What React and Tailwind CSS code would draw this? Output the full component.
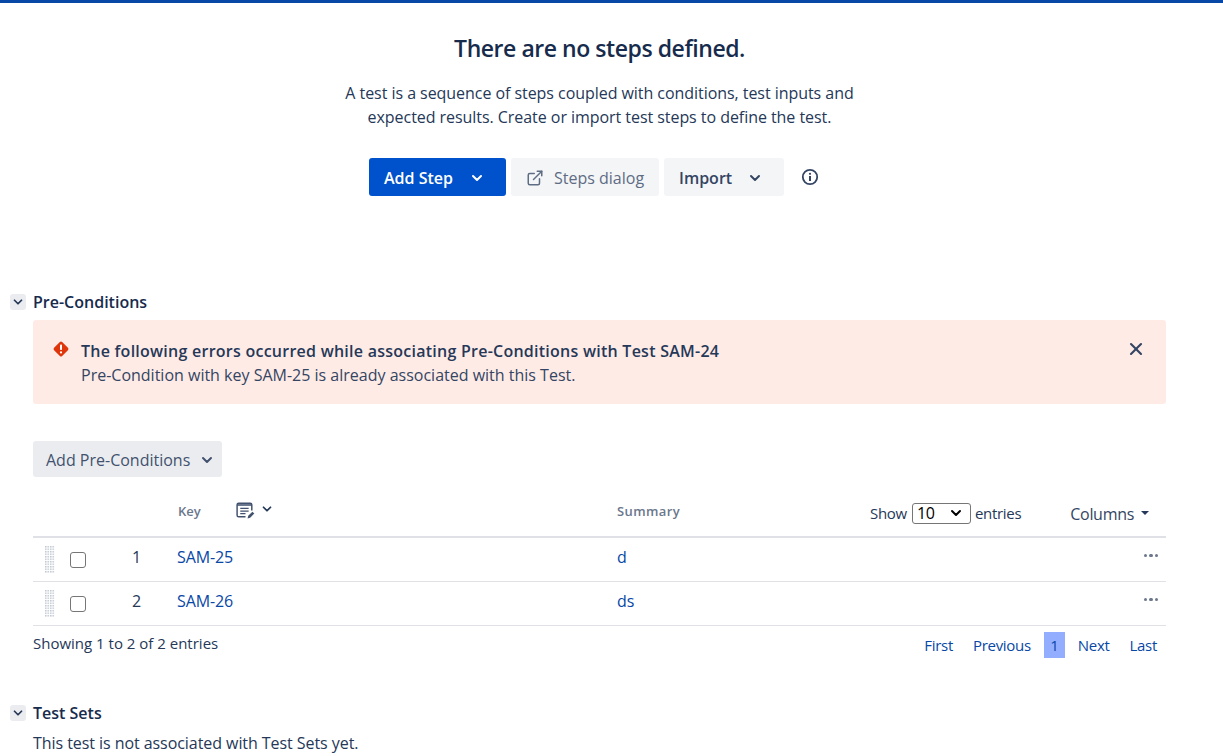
import React from "react";
import { ChevronDown, X, ExternalLink } from "lucide-react";

const font = "font-['Open_Sans','Noto_Sans',sans-serif]";

const SectionTitle = ({ children }) => (
    <div className="flex items-center h-5">
        <span className="w-4 h-4 ml-[10px] mr-[7px] bg-[#ebecf0] rounded-[3px] flex items-center justify-center">
            <ChevronDown className="w-3.5 h-3.5 text-[#253858]" strokeWidth={3} />
        </span>
        <span className="text-[16px] font-semibold text-[#172b4d]">{children}</span>
    </div>
);

const Grip = () => (
    <svg width="10" height="27" viewBox="0 0 10 27" className="text-[#c1c7d0]">
        <defs>
            <pattern id="grip" width="2.5" height="2.5" patternUnits="userSpaceOnUse">
                <rect width="1.5" height="1.5" fill="currentColor" />
            </pattern>
        </defs>
        <rect width="10" height="27" fill="url(#grip)" />
    </svg>
);

const Row = ({ n, issue, summary }) => (
    <div className="flex items-center h-11 border-b border-[#dfe1e6] text-[16px] tracking-[-0.1px]">
        <div className="w-[37px] pl-3 shrink-0"><Grip /></div>
        <div className="w-[47px] shrink-0">
            <span className="block w-4 h-4 border border-[#767676] rounded-[3px] bg-white" />
        </div>
        <div className="w-[60px] shrink-0 text-[#253858] pb-1.5 pl-[15px]">{n}</div>
        <a className="w-[440px] shrink-0 text-[#0747a6] pb-1.5">{issue}</a>
        <a className="flex-1 text-[#0747a6] pb-1.5">{summary}</a>
        <span className="flex gap-[2px] pr-2 pb-2">
            <i className="w-[3.5px] h-[3.5px] rounded-full bg-[#6b778c]" />
            <i className="w-[3.5px] h-[3.5px] rounded-full bg-[#6b778c]" />
            <i className="w-[3.5px] h-[3.5px] rounded-full bg-[#6b778c]" />
        </span>
    </div>
);

const App = () => {
    return (
        <div className={`${font} bg-white h-[756px] overflow-hidden text-[#253858] border-t-[3px] border-[#0747a6]`}>
            {/* Empty state */}
            <div className="pl-[33px] pr-[57px] text-center">
                <h1 className="mt-[29px] text-[23px] leading-8 font-semibold text-[#172b4d] tracking-[-0.45px]">
                    There are no steps defined.
                </h1>
                <p className="mt-[17px] text-[16px] leading-6 text-[#253858] tracking-[-0.05px]">
                    A test is a sequence of steps coupled with conditions, test inputs and
                    <br />
                    expected results. Create or import test steps to define the test.
                </p>
                <div className="mt-[29px] flex justify-center items-center h-[38px] text-[16px]">
                    <button className="h-[38px] w-[137px] pt-[1px] bg-[#0052cc] text-white font-semibold rounded-[3px] flex items-center pl-[15px]">
                        Add Step
                        <ChevronDown className="w-4 h-4 ml-4" strokeWidth={3} />
                    </button>
                    <button className="h-[38px] w-[148px] pt-[1px] ml-[5px] bg-[#f4f5f7] text-[#5e6c84] rounded-[3px] flex items-center pl-[15px]">
                        <ExternalLink className="w-[18px] h-[18px] mr-[10px]" strokeWidth={2} />
                        Steps dialog
                    </button>
                    <button className="h-[38px] w-[120px] pt-[1px] ml-[5px] bg-[#f4f5f7] text-[#344563] font-semibold rounded-[3px] flex items-center pl-[15px]">
                        Import
                        <ChevronDown className="w-4 h-4 ml-[15px]" strokeWidth={3} />
                    </button>
                    <svg width="18" height="18" viewBox="0 0 18 18" className="ml-[17px] mr-[11px] text-[#344563]" fill="none">
                        <circle cx="9" cy="9" r="7.2" stroke="currentColor" strokeWidth="1.8" />
                        <rect x="8" y="8" width="2" height="5" fill="currentColor" />
                        <circle cx="9" cy="5.8" r="1.1" fill="currentColor" />
                    </svg>
                </div>
            </div>

            {/* Pre-Conditions */}
            <div className="mt-[96px]">
                <SectionTitle>Pre-Conditions</SectionTitle>
            </div>
            <div className="ml-[33px] w-[1133px]">
                <div className="mt-2 h-[84px] bg-[#ffebe6] rounded-[3px] flex pl-[19px] pr-[20px] pt-[19px]">
                    <svg width="18" height="18" viewBox="0 0 18 18" className="shrink-0 mt-[1px]">
                        <rect x="3.3" y="3.3" width="11.4" height="11.4" rx="1.6" transform="rotate(45 9 9)" fill="#de350b" />
                        <rect x="8" y="4.500" width="2" height="5.600" rx="0.8" fill="#fff" />
                        <circle cx="9" cy="12.4" r="1.1" fill="#fff" />
                    </svg>
                    <div className="ml-[11px] flex-1 text-[16px] leading-6">
                        <div className="font-semibold text-[#253858] tracking-[0.25px]">
                            The following errors occurred while associating Pre-Conditions with Test SAM-24
                        </div>
                        <div className="text-[#344563]">Pre-Condition with key SAM-25 is already associated with this Test.</div>
                    </div>
                    <X className="w-5 h-5 text-[#344563]" strokeWidth={2.5} />
                </div>

                <button className="mt-[37px] h-9 w-[189px] pt-[1px] bg-[#ebecf0] rounded-[3px] text-[#42526e] text-[16px] flex items-center pl-[13px]">
                    Add Pre-Conditions
                    <ChevronDown className="w-4 h-4 ml-[9px]" strokeWidth={3} />
                </button>

                {/* Table head */}
                <div className="mt-[12px] h-[49px] flex items-center border-b-2 border-[#dfe1e6]">
                    <div className="w-[144px] shrink-0" />
                    <div className="w-[58px] shrink-0 text-[13px] font-semibold text-[#6b778c] mt-[-1px] pl-[1px]">Key</div>
                    <div className="w-[382px] shrink-0 flex items-center pb-1">
                        <svg width="21" height="21" viewBox="0 0 20 20" fill="none" className="text-[#42526e]">
                            <path d="M16 10V4.500A1.500 1.500 0 0 0 14.500 3h-11A1.500 1.500 0 0 0 2 4.500v10A1.500 1.500 0 0 0 3.500 16H10" stroke="currentColor" strokeWidth="1.4" />
                            <path d="M2 4h14v1.500H2z" fill="currentColor" />
                            <path d="M5 8h8M5 10.500h8M5 13h5" stroke="currentColor" strokeWidth="1.2" />
                            <path d="M12 17.500l.6-2.400 4-4 1.800 1.800-4 4z" fill="currentColor" />
                        </svg>
                        <ChevronDown className="w-3.5 h-3.5 ml-[4px] mb-1 text-[#253858]" strokeWidth={3} />
                    </div>
                    <div className="flex-1 text-[13px] font-semibold text-[#6b778c] tracking-[0.4px] mt-[-1px]">Summary</div>
                    <div className="flex items-center text-[15px] tracking-[-0.3px] text-[#253858] mt-[1px]">
                        Show
                        <span className="ml-[5px] mr-[4px] w-[59px] h-[21px] border border-[#767676] rounded-[3px] flex items-center justify-between pl-1 pr-1.5 text-black text-[16px]">
                            10
                            <ChevronDown className="w-4 h-4" strokeWidth={3} />
                        </span>
                        entries
                        <span className="ml-[49px] pt-[1px] text-[16px] text-[#344563]">Columns</span>
                        <span className="ml-[7px] mr-[17px] border-x-4 border-x-transparent border-t-4 border-t-[#253858]" />
                    </div>
                </div>

                <Row n="1" issue="SAM-25" summary="d" />
                <Row n="2" issue="SAM-26" summary="ds" />

                {/* Footer */}
                <div className="flex justify-between text-[15px]">
                    <div className="mt-[6px] text-[#253858]">Showing 1 to 2 of 2 entries</div>
                    <div className="mt-[6px] flex items-center h-[26px] text-[#0747a6] pr-[9px] tracking-[-0.3px]">
                        <a>First</a>
                        <a className="ml-5">Previous</a>
                        <a className="ml-[13px] w-[21px] h-[26px] bg-[#94aeff] flex items-center justify-center">1</a>
                        <a className="ml-[13px]">Next</a>
                        <a className="ml-5">Last</a>
                    </div>
                </div>
            </div>

            {/* Test Sets */}
            <div className="mt-[45px]">
                <SectionTitle>Test Sets</SectionTitle>
            </div>
            <p className="ml-[33px] mt-[8px] text-[16px] leading-6 text-[#253858] tracking-[-0.06px]">
                This test is not associated with Test Sets yet.
            </p>
        </div>
    );
};

export default App;
